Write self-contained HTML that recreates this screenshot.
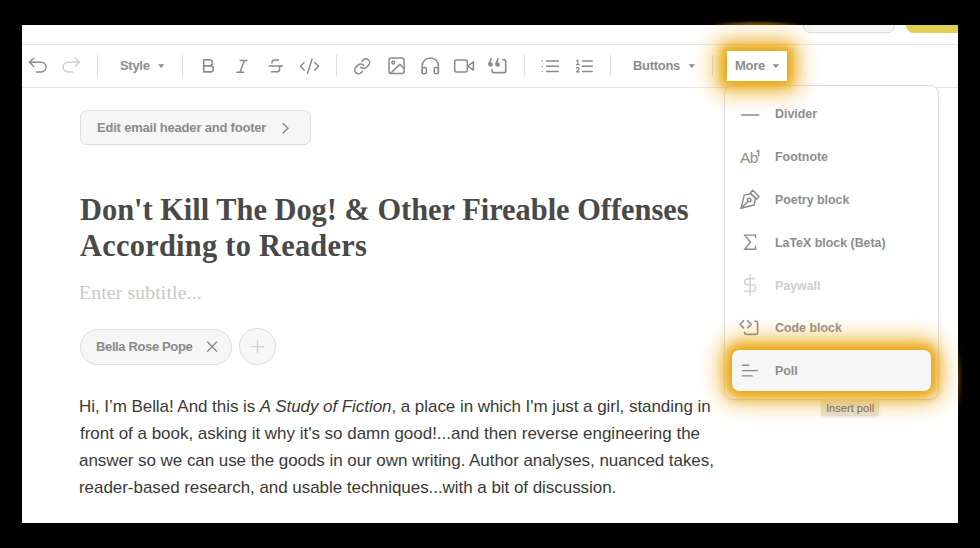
<!DOCTYPE html>
<html><head><meta charset="utf-8">
<style>
html,body{margin:0;padding:0;}
body{width:980px;height:548px;background:#000;position:relative;overflow:hidden;font-family:"Liberation Sans",sans-serif;}
.a{position:absolute;}
#page{left:22px;top:25px;width:936px;height:498px;background:#fff;overflow:hidden;}
.hl{height:1px;background:#e5e5e5;}
.vs{width:1px;height:21px;background:#dedede;top:55px;}
.tb{font-weight:bold;font-size:13px;color:#8c8c8c;white-space:nowrap;line-height:16px;}
.mi{font-weight:bold;font-size:12.4px;color:#8d8d8d;white-space:nowrap;line-height:16px;left:775px;}
.body{font-size:17px;color:#3a3a3a;white-space:nowrap;line-height:20px;left:80px;}
svg.ic{position:absolute;left:0;top:0;width:980px;height:548px;}
</style></head>
<body>
<div id="page" class="a"></div>

<!-- header top buttons -->
<div class="a" style="left:803px;top:10px;width:90px;height:21px;background:#f6f6f6;border:1px solid #dcdcdc;border-radius:7px;"></div>
<div class="a" style="left:906px;top:10px;width:80px;height:23px;background:#e3cf52;border-radius:8px;"></div>
<!-- re-cover black top -->
<div class="a" style="left:0;top:0;width:980px;height:25px;background:#000;"></div>
<div class="a" style="left:958px;top:0;width:22px;height:548px;background:#000;"></div>

<!-- toolbar lines -->
<div class="a hl" style="left:22px;top:44px;width:936px;"></div>
<div class="a hl" style="left:22px;top:87px;width:936px;"></div>

<!-- separators -->
<div class="a vs" style="left:97px;"></div>
<div class="a vs" style="left:182px;"></div>
<div class="a vs" style="left:336px;"></div>
<div class="a vs" style="left:524px;"></div>
<div class="a vs" style="left:610px;"></div>
<div class="a vs" style="left:712px;"></div>

<!-- toolbar text -->
<div class="a tb" style="left:120px;top:58px;letter-spacing:-0.3px;">Style</div>
<div class="a tb" style="left:633px;top:58px;letter-spacing:-0.3px;">Buttons</div>

<!-- More button -->
<div class="a" style="left:727px;top:51px;width:60px;height:30px;background:#fff;"></div>
<div class="a tb" style="left:735px;top:58px;letter-spacing:-0.3px;">More</div>

<!-- Edit email header -->
<div class="a" style="left:80px;top:110px;width:229px;height:33px;background:#f6f6f6;border:1px solid #dcdcdc;border-radius:7px;"></div>
<div class="a tb" style="left:97px;top:120px;font-size:13px;letter-spacing:-0.2px;color:#8a8a8a;">Edit email header and footer</div>

<!-- Title -->
<div class="a" style="left:80px;top:192px;font-family:'Liberation Serif',serif;font-weight:bold;font-size:30.4px;line-height:36px;color:#494949;white-space:nowrap;transform:scaleY(1.07);transform-origin:0 28px;">Don't Kill The Dog! &amp; Other Fireable Offenses</div>
<div class="a" style="left:80px;top:228px;font-family:'Liberation Serif',serif;font-weight:bold;font-size:30.4px;line-height:36px;color:#494949;white-space:nowrap;transform:scaleY(1.07);transform-origin:0 28px;letter-spacing:0.26px;">According to Readers</div>
<div class="a" style="left:80px;top:281px;font-family:'Liberation Serif',serif;font-size:19.7px;line-height:22px;color:#c8c8c8;white-space:nowrap;letter-spacing:0.15px;left:79px;">Enter subtitle...</div>

<!-- Author chip -->
<div class="a" style="left:80px;top:329px;width:150px;height:34px;background:#f6f6f6;border:1px solid #dcdcdc;border-radius:18px;"></div>
<div class="a tb" style="left:96px;top:339px;font-size:13px;letter-spacing:-0.37px;color:#8a8a8a;">Bella Rose Pope</div>
<div class="a" style="left:239px;top:328px;width:35px;height:35px;background:#f7f7f7;border:1px solid #dcdcdc;border-radius:50%;"></div>

<!-- Body text -->
<div class="a body" style="top:397px;left:79px;letter-spacing:-0.055px;">Hi, I’m Bella! And this is <i>A Study of Fiction</i>, a place in which I'm just a girl, standing in</div>
<div class="a body" style="top:424px;letter-spacing:-0.015px;">front of a book, asking it why it's so damn good!...and then reverse engineering the</div>
<div class="a body" style="top:451px;left:79px;letter-spacing:-0.06px;">answer so we can use the goods in our own writing. Author analyses, nuanced takes,</div>
<div class="a body" style="top:478px;left:79px;letter-spacing:-0.045px;">reader-based research, and usable techniques...with a bit of discussion.</div>

<!-- Dropdown -->
<div class="a" style="left:724px;top:85px;width:213px;height:313px;background:#fff;border:1px solid #dedede;border-radius:9px;box-shadow:0 2px 6px rgba(0,0,0,0.06);"></div>
<div class="a mi" style="top:106px;">Divider</div>
<div class="a mi" style="top:149px;">Footnote</div>
<div class="a mi" style="top:192px;">Poetry block</div>
<div class="a mi" style="top:235px;">LaTeX block (Beta)</div>
<div class="a mi" style="top:278px;color:#cdcdcd;">Paywall</div>
<div class="a mi" style="top:320px;">Code block</div>
<div class="a" style="left:732px;top:350px;width:199px;height:41px;background:#f6f6f6;border-radius:7px;"></div>
<div class="a mi" style="top:363px;">Poll</div>
<div class="a" style="left:740px;top:149px;font-size:15.5px;color:#8f8f8f;line-height:18px;white-space:nowrap;letter-spacing:-0.6px;">Ab</div>


<!-- tooltip -->
<div class="a" style="left:821px;top:399px;width:58px;height:17px;background:#e4e2dc;border-radius:3px;box-shadow:0 1px 3px rgba(0,0,0,0.1);"></div>
<div class="a" style="left:826px;top:402px;font-size:11.1px;color:#5e5e5e;line-height:12px;white-space:nowrap;">Insert poll</div>

<!-- icons -->
<svg class="ic" viewBox="0 0 980 548" fill="none" stroke="#8a8a8a" stroke-width="1.5" stroke-linecap="round" stroke-linejoin="round">
  <!-- undo -->
  <path d="M33.7 58.2 L29.4 62.2 L33.7 66.2 M29.6 62.2 H41.2 A4.85 4.85 0 0 1 41.2 71.9 H36.5"/>
  <!-- redo -->
  <path stroke="#cfcfcf" d="M75.2 58.2 L79.5 62.2 L75.2 66.2 M79.3 62.2 H68 A4.85 4.85 0 0 0 68 71.9 H72.7"/>
  <!-- carets -->
  <path fill="#8a8a8a" stroke="none" d="M158 64.3 H164.4 L161.2 68 Z M688.6 64.3 H695 L691.8 68 Z M772.7 64.3 H779.1 L775.9 68 Z"/>
  <!-- bold -->
  <path stroke-width="1.6" d="M203.7 59.8 V71.9 H210.3 A3 3 0 0 0 210.3 65.9 H203.7 M203.7 59.8 H209.4 A3 3 0 0 1 209.4 65.9"/>
  <!-- italic -->
  <path d="M240.2 60.4 H247 M236.9 72.2 H243.7 M244.4 60.4 L240 72.2"/>
  <!-- strike -->
  <path d="M271.9 63 A2.9 2.9 0 0 1 274.6 60.1 H278.6 M269.2 65.9 H282.5 M279.6 66.5 V68.9 A2.9 2.9 0 0 1 276.7 71.8 H271.5"/>
  <!-- code -->
  <path d="M304.1 62.6 L300.5 66.3 L304.1 70.1 M314.8 62.6 L318.6 66.3 L314.8 70.1 M312 59.3 L307.5 73.4"/>
  <!-- link (lucide) -->
  <g transform="translate(353.2 57.3) scale(0.75)" stroke-width="2">
    <path d="M10 13a5 5 0 0 0 7.54.54l3-3a5 5 0 0 0-7.07-7.07l-1.72 1.71"/>
    <path d="M14 11a5 5 0 0 0-7.54-.54l-3 3a5 5 0 0 0 7.07 7.07l1.71-1.71"/>
  </g>
  <!-- image -->
  <rect x="389" y="58.1" width="15.1" height="15.4" rx="2.2"/>
  <circle cx="393.3" cy="62.7" r="1.4"/>
  <path d="M390.6 73.3 L399.9 64.4 L404 68.5"/>
  <!-- headphones -->
  <path d="M422.2 73 V66 A8.1 8.1 0 0 1 438.4 66 V73"/>
  <rect x="422.2" y="67.4" width="4.2" height="6.4" rx="1.6"/>
  <rect x="434.2" y="67.4" width="4.2" height="6.4" rx="1.6"/>
  <!-- video -->
  <rect x="454.7" y="59.9" width="12.6" height="12.1" rx="2"/>
  <path d="M467.8 66 L473.4 61.9 V70.1 Z"/>
  <!-- quote -->
  <circle cx="490.6" cy="64.5" r="2.35" fill="#8a8a8a" stroke="none"/>
  <circle cx="497.6" cy="64.5" r="2.35" fill="#8a8a8a" stroke="none"/>
  <path stroke-width="1.7" stroke-linecap="butt" d="M491.2 58.3 L488.9 64.2 M498.2 58.3 L495.9 64.2"/>
  <path stroke-width="1.6" d="M503 59.6 H504 A1.7 1.7 0 0 1 505.7 61.3 V70.9 A1.7 1.7 0 0 1 504 72.6 H493.8 A1.7 1.7 0 0 1 492.1 70.9 V69.8"/>
  <!-- bullet list -->
  <path stroke-linecap="butt" d="M546.1 60.9 H558.9 M546.1 66.3 H558.9 M546.1 71.6 H558.9"/>
  <path stroke-width="1.3" d="M542.2 60.9 h0.1 M542.2 66.3 h0.1 M542.2 71.6 h0.1"/>
  <!-- ordered list -->
  <path stroke-linecap="butt" d="M582 60.9 H592.8 M582 66.3 H592.8 M582 71.6 H592.8"/>
  <path stroke-width="1.2" d="M576.6 61 L577.9 60.2 V64.6 M576.4 64.6 H579.2 M576.5 68.3 A1.4 1.3 0 0 1 579.2 68.6 C579.2 69.6 577.5 70.5 576.4 71.9 H579.4"/>
  <!-- edit chevron -->
  <path stroke-width="1.4" d="M283 123.5 L288 128.3 L283 133"/>
  <!-- chip x -->
  <path stroke-width="1.4" d="M207.6 342 L216.6 351.2 M216.6 342 L207.6 351.2"/>
  <!-- plus -->
  <path stroke="#cfcfcf" stroke-width="1.3" d="M257.5 341 V352.5 M251.7 346.7 H263.3"/>
  <path stroke="#8f8f8f" stroke-width="1.5" stroke-linecap="butt" d="M756.6 151.9 L758.6 150.2 V156.4"/>
  <!-- menu: divider -->
  <path d="M741.6 114.9 H758.7"/>
  <!-- pen -->
  <g transform="matrix(0.9 0 0 -0.9 739.3 210)" stroke-width="1.6">
    <path d="m12 19 7-7 3 3-7 7-3-3z"/><path d="m18 13-1.5-7.5L2 2l3.5 14.5L13 18l5-5z"/><path d="m2 2 7.586 7.586"/><circle cx="11" cy="11" r="2"/>
  </g>
  <!-- sigma -->
  <path stroke-width="1.4" stroke-linejoin="miter" stroke-linecap="butt" d="M755.6 238.3 V235.1 H744.8 L750.4 242.3 L744.8 249.3 H755.6 V246.1"/>
  <!-- dollar -->
  <path stroke="#cfcfcf" stroke-width="1.4" d="M754.8 278.8 H747.8 A3 3 0 0 0 747.8 284.9 H752.6 A3.1 3.1 0 0 1 752.6 291.1 H744.4 M750.1 274.6 V295.2"/>
  <!-- code block -->
  <path stroke-width="1.6" d="M743.6 320.7 L740.1 324.3 L743.6 327.9 M747.7 320.7 L751.2 324.3 L747.7 327.9 M755 321.3 H756 A1.6 1.6 0 0 1 757.6 322.9 V332.8 A1.6 1.6 0 0 1 756 334.4 H746.2 A1.6 1.6 0 0 1 744.6 332.8 V332.2"/>
  <!-- poll -->
  <path stroke-width="1.4" d="M742.4 365.2 H748.8 M742.4 370.6 H757.6 M742.4 375.9 H752.2"/>
</svg>

<!-- glows -->
<div class="a glow" style="left:727px;top:51px;width:60px;height:30px;box-shadow:0 0 8px 4px rgba(233,162,10,0.8),0 0 22px 10px rgba(236,168,20,0.92);"></div>
<div class="a glow" style="left:732px;top:350px;width:199px;height:41px;border-radius:7px;box-shadow:0 0 8px 4px rgba(233,162,10,0.8),0 0 22px 10px rgba(236,168,20,0.92);"></div>
<div class="a" style="left:712px;top:21px;width:90px;height:4px;background:radial-gradient(ellipse 50% 100% at 50% 100%, rgba(125,84,0,0.95) 0%, rgba(110,74,0,0.75) 55%, rgba(0,0,0,0) 100%);"></div>
<div class="a" style="left:958px;top:345px;width:5px;height:68px;background:radial-gradient(ellipse 100% 50% at 0% 50%, rgba(120,80,0,0.55), rgba(0,0,0,0) 100%);"></div>
</body></html>
